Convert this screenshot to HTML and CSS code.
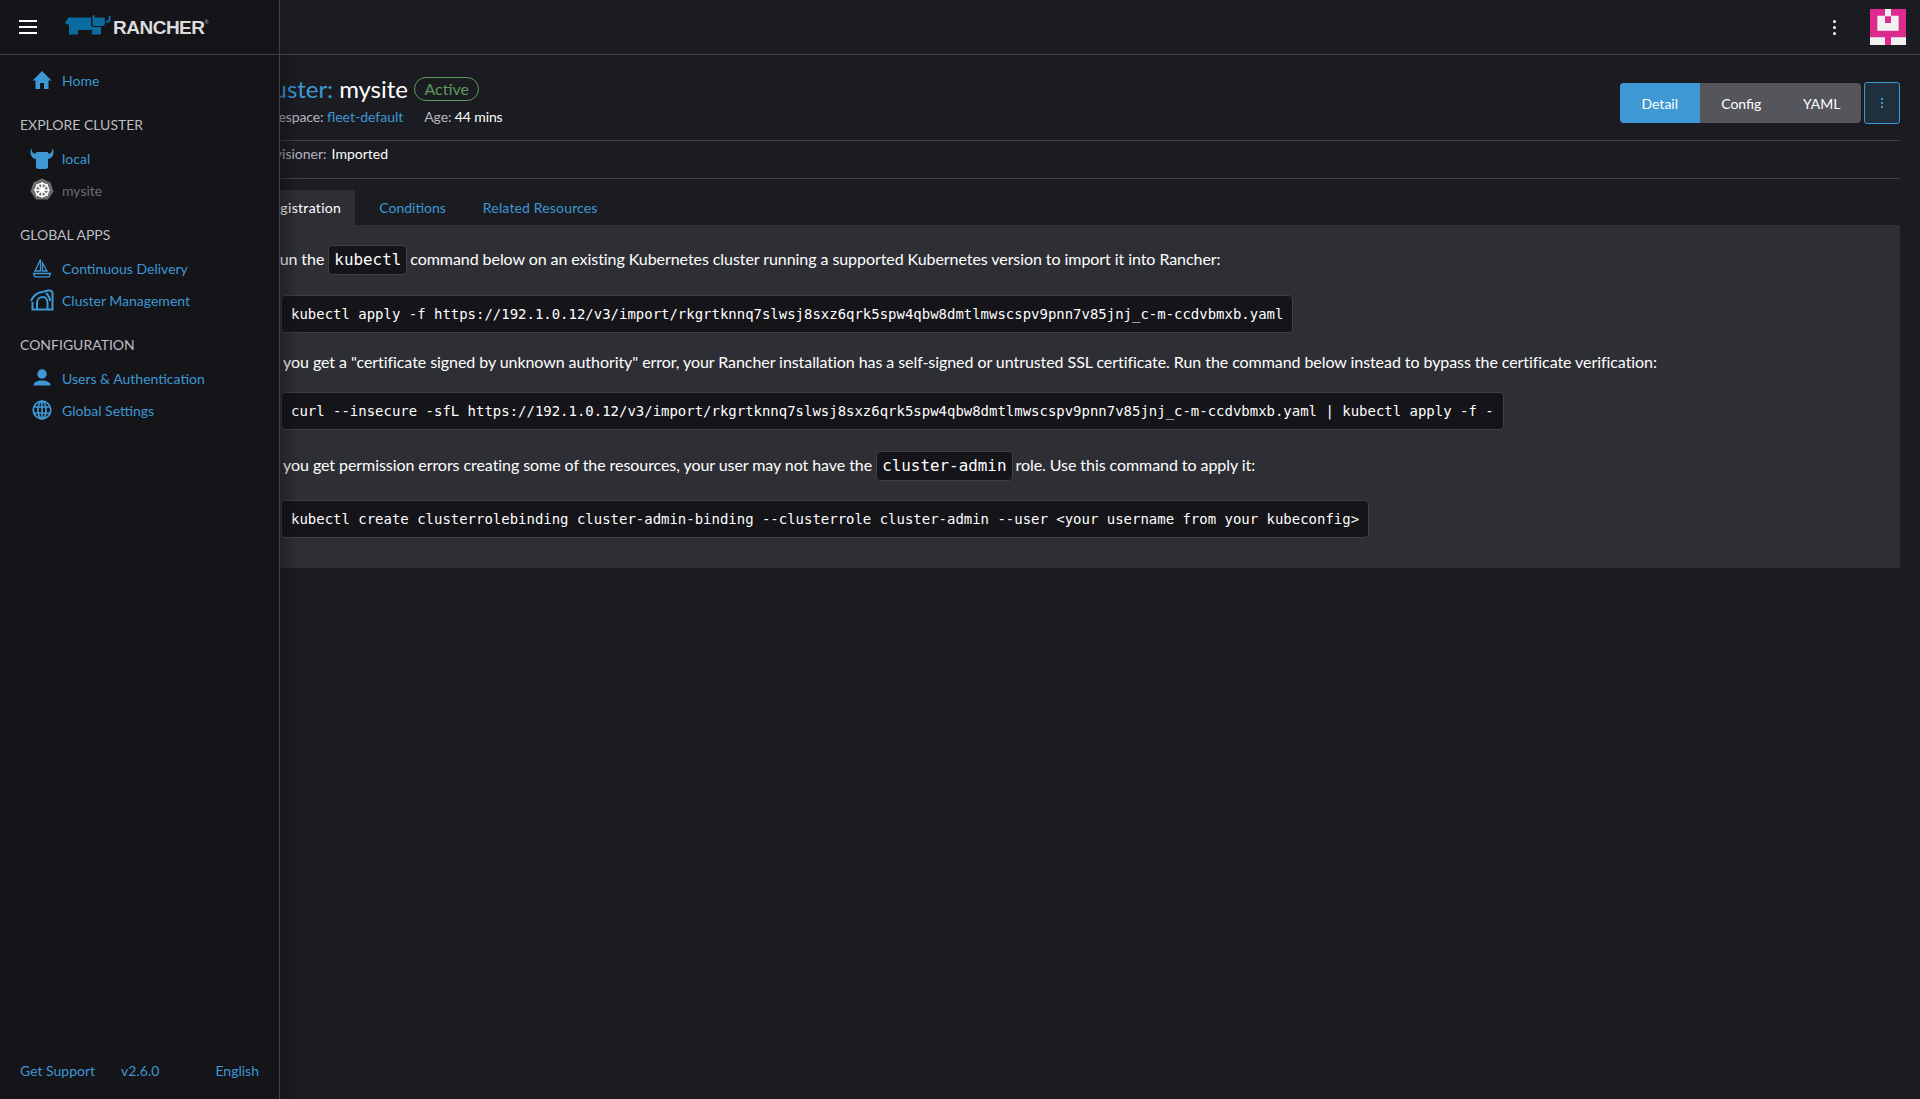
FILE: index.html
```html
<!DOCTYPE html>
<html lang="en">
<head>
<meta charset="utf-8">
<title>Rancher</title>
<link rel="stylesheet" href="styles.css">
</head>
<body>
<aside class="sidebar">
  <div class="brand">
    <div class="burger"><span></span><span></span><span></span></div>
    <div class="logo">
      <svg class="cow" viewBox="0 0 46 22"><path d="M0.5 7L3.5 2.5H26V9C26 11 27 12 29 12H36V19.5H27V15H13V19.5H4V9.5L0.5 9Z"/><path d="M27.5 3V0.5L29.5 0V2.5H39.5L40 8C40 10 39 11 37 11H29.5C28 11 27.5 10 27.5 9Z"/><path d="M41 5.5H43.5V1.5L45.5 0.5V5C45.5 6.5 44.5 7.5 43 7.5H41Z"/></svg>
      <span class="logo-text">RANCHER</span><span class="logo-reg">®</span>
    </div>
  </div>
  <nav class="nav">
    <a class="nav-row"><span class="nav-icon"><svg viewBox="0 0 20 20" class="ico-fill"><path d="M10 1L0.5 10.5H3.5V19H8V13H12V19H16.5V10.5H19.5Z"/></svg></span>Home</a>
    <div class="nav-head">EXPLORE CLUSTER</div>
    <a class="nav-row"><span class="nav-icon nav-icon-lg"><svg viewBox="0 0 24 24" class="ico-fill"><path d="M1 2L2 5C2.500 7 3.500 7.500 6 7.500V13C3 13 0.500 10 0.500 6Z"/><path d="M23 2L22 5C21.500 7 20.500 7.500 18 7.500V13C21 13 23.500 10 23.500 6Z"/><path d="M7 6H17C17.500 6 18 6.500 18 7V20.500C18 22 17 23 15.500 23H8.500C7 23 6 22 6 20.500V7C6 6.500 6.500 6 7 6Z"/></svg></span>local</a>
    <a class="nav-row nav-muted"><span class="nav-icon nav-icon-lg"><svg viewBox="0 0 24 24"><path class="k8s-hex" d="M12 0.500L20.500 4.500L23.500 13.500L18 21.500H6L0.500 13.500L3.500 4.500Z"/><g class="k8s-wheel"><circle cx="12" cy="12" r="6.500"/><circle cx="12" cy="12" r="2"/><path d="M12 4V20M4 12H20M6.300 6.300L17.700 17.700M17.700 6.300L6.300 17.700"/></g></svg></span>mysite</a>
    <div class="nav-head">GLOBAL APPS</div>
    <a class="nav-row"><span class="nav-icon"><svg viewBox="0 0 20 20" class="ico-boat"><path d="M8.500 1.500V13H3Z"/><path d="M10.500 5L15 13H10.500Z"/><path d="M1.500 15.500H18.500L17 18.800H3Z"/></svg></span>Continuous Delivery</a>
    <a class="nav-row"><span class="nav-icon nav-icon-lg"><svg viewBox="0 0 24 22" class="ico-arch"><path d="M1 12C3 7 8 3 12 3C14 3 16 1 20 1.500C22 1.800 22.500 2.500 22.500 4V20.500H2.500V13"/><path d="M7 20.500V14C7 10 10 8 13 8C15.500 8 17.500 10.500 17.500 14V20.500"/><path d="M16 4C18 6 20 9 20 12"/></svg></span>Cluster Management</a>
    <div class="nav-head">CONFIGURATION</div>
    <a class="nav-row"><span class="nav-icon"><svg viewBox="0 0 20 20" class="ico-fill"><circle cx="10" cy="6" r="4.700"/><path d="M1.500 17.500C1.500 14 5 12.500 10 12.500S18.500 14 18.500 17.500Z"/></svg></span>Users &amp; Authentication</a>
    <a class="nav-row"><span class="nav-icon"><svg viewBox="0 0 20 20" class="ico-globe"><circle cx="10" cy="10" r="8.800"/><ellipse cx="10" cy="10" rx="4" ry="8.800"/><path d="M10 1V19M1.500 7H18.500M1.500 13H18.500"/></svg></span>Global Settings</a>
  </nav>
  <footer class="side-foot">
    <a>Get Support</a>
    <a class="foot-ver">v2.6.0</a>
    <a class="foot-lang">English</a>
  </footer>
</aside>

<div class="main">
  <header class="topbar">
    <div class="dots"><span></span><span></span><span></span></div>
    <svg class="avatar" viewBox="0 0 108 108"><rect class="av-bg" width="108" height="108"/><path class="av-fg" d="M45 0H63V20H86V65H22V20H45ZM45 22V42H63V22ZM0 85H45V108H0ZM63 85H108V108H63Z" fill-rule="evenodd"/></svg>
  </header>
  <div class="content">
    <section class="title-block">
      <div class="title-left">
        <h1 class="title"><a class="title-link">Cluster:</a> mysite <span class="badge">Active</span></h1>
        <div class="sub"><span>Namespace: <a>fleet-default</a></span><span>Age: <b>44 mins</b></span></div>
      </div>
      <div class="actions">
        <div class="seg"><button class="seg-btn seg-on">Detail</button><button class="seg-btn seg-off">Config</button><button class="seg-btn seg-off">YAML</button></div>
        <button class="kebab"><span></span><span></span><span></span></button>
      </div>
    </section>
    <div class="meta"><span>Provisioner: </span><b>Imported</b></div>
    <div class="tabs">
      <a class="tab tab-on">Registration</a>
      <a class="tab tab-cond">Conditions</a>
      <a class="tab tab-rel">Related Resources</a>
    </div>
    <section class="panel">
      <p class="para">Run the <code class="inl">kubectl</code> command below on an existing Kubernetes cluster running a supported Kubernetes version to import it into Rancher:</p>
      <div class="cmd cmd-a">kubectl apply -f https://192.1.0.12/v3/import/rkgrtknnq7slwsj8sxz6qrk5spw4qbw8dmtlmwscspv9pnn7v85jnj_c-m-ccdvbmxb.yaml</div>
      <p class="para">If you get a "certificate signed by unknown authority" error, your Rancher installation has a self-signed or untrusted SSL certificate. Run the command below instead to bypass the certificate verification:</p>
      <div class="cmd cmd-b">curl --insecure -sfL https://192.1.0.12/v3/import/rkgrtknnq7slwsj8sxz6qrk5spw4qbw8dmtlmwscspv9pnn7v85jnj_c-m-ccdvbmxb.yaml | kubectl apply -f -</div>
      <p class="para">If you get permission errors creating some of the resources, your user may not have the <code class="inl">cluster-admin</code> role. Use this command to apply it:</p>
      <div class="cmd cmd-c">kubectl create clusterrolebinding cluster-admin-binding --clusterrole cluster-admin --user &lt;your username from your kubeconfig&gt;</div>
    </section>
  </div>
</div>
</body>
</html>
```

FILE: styles.css
```css
* { box-sizing: border-box; }
html, body { height: 100%; }
body {
  margin: 0;
  display: flex;
  height: 100vh;
  overflow: hidden;
  background: #1b1c21;
  color: #e6e6e8;
  font-family: Lato, "Liberation Sans", sans-serif;
  font-size: 14px;
}
a { color: #3d98d3; text-decoration: none; }

/* Sidebar */
.sidebar {
  flex: 0 0 280px;
  display: flex;
  flex-direction: column;
  background: #141419;
  border-right: 1px solid #3f3f45;
}
.brand {
  flex: 0 0 55px;
  display: flex;
  align-items: center;
  padding-left: 19px;
  border-bottom: 1px solid #3f3f45;
}
.burger { width: 18px; display: flex; flex-direction: column; gap: 4px; margin-right: 28px; }
.burger span { height: 2px; background: #fff; }
.logo { display: flex; align-items: flex-start; }
.cow { width: 46px; height: 22px; fill: #0a6c9e; margin-top: 1px; }
.logo-text {
  font-family: "Liberation Sans", sans-serif;
  font-weight: 700;
  font-size: 19px;
  line-height: 27px;
  letter-spacing: -0.500px;
  color: #dcdcdc;
  margin-left: 2px;
}
.logo-reg { font-size: 5px; line-height: 10px; color: #aaa; margin-top: 3px; }

.nav { padding-top: 9px; display: flex; flex-direction: column; }
.nav-row {
  height: 32px;
  display: flex;
  align-items: center;
  padding-left: 32px;
  font-size: 14px;
}
.nav-icon { width: 20px; height: 20px; margin-right: 10px; display: flex; align-items: center; justify-content: center; }
.nav-icon svg { width: 20px; height: 20px; flex: none; }
.nav-icon-lg svg { width: 24px; height: 24px; }
.nav-muted { color: #6b6b72; }
.nav-head {
  height: 32px;
  margin-top: 12px;
  margin-bottom: 2px;
  padding-left: 20px;
  display: flex;
  align-items: center;
  color: #bdbdc2;
  font-size: 14px;
}
.ico-fill { fill: #3d98d3; }
.ico-boat { fill: none; stroke: #3d98d3; stroke-width: 1.300; }
.ico-arch { fill: none; stroke: #3d98d3; stroke-width: 2; }
.ico-globe { fill: none; stroke: #3d98d3; stroke-width: 1.7; }
.k8s-hex { fill: #6d6d6d; }
.k8s-wheel { fill: none; stroke: #fff; stroke-width: 1.5; }

.side-foot {
  margin-top: auto;
  display: flex;
  height: 58px;
  padding: 0 20px;
  align-items: center;
}
.foot-ver { margin-left: 26px; }
.foot-lang { margin-left: auto; }

/* Main */
.main {
  position: relative;
  flex: 1;
  min-width: 0;
  display: flex;
  flex-direction: column;
  overflow: hidden;
}
.main::before {
  content: "";
  position: absolute;
  left: 0;
  top: 55px;
  bottom: 0;
  width: 18px;
  background: linear-gradient(to right, rgba(10, 10, 14, 0.35), rgba(10, 10, 14, 0));
  pointer-events: none;
}
.topbar {
  flex: 0 0 55px;
  display: flex;
  align-items: center;
  justify-content: flex-end;
  padding-right: 14px;
  border-bottom: 1px solid #3f3f45;
}
.dots { display: flex; flex-direction: column; gap: 3px; margin-right: 34px; }
.dots span { width: 3px; height: 3px; border-radius: 50%; background: #fff; }
.avatar { width: 36px; height: 36px; display: block; }
.av-bg { fill: #dd2a8e; }
.av-fg { fill: #f1f1f1; }

.content { margin-left: -30px; padding-right: 20px; }

.title-block {
  height: 86px;
  display: flex;
  justify-content: space-between;
  border-bottom: 1px solid #3f3f45;
}
.title-left { padding-top: 16px; padding-left: 2px; }
.title { margin: 0; font-size: 24px; font-weight: 400; line-height: 36px; color: #fff; display: flex; align-items: center; white-space: pre; letter-spacing: -0.050px; }
.title-link { color: #3d98d3; }
.badge {
  height: 24px;
  padding: 0 9.500px;
  border: 1px solid #5d995d;
  border-radius: 12px;
  color: #5d995d;
  font-size: 16px;
  line-height: 22px;
  letter-spacing: 0;
}
.sub { display: flex; gap: 21px; color: #b6b6c2; font-size: 14px; line-height: 20px; margin-left: -2px; letter-spacing: -0.120px; }
.sub a { letter-spacing: 0; }
.sub b { font-weight: 400; color: #fff; }
.actions { display: flex; gap: 3px; padding-top: 27px; align-items: flex-start; }
.seg { display: flex; height: 40px; margin-top: 1px; border-radius: 4px; overflow: hidden; background: #55565b; }
.seg-btn {
  width: 80.500px;
  border: 0;
  padding: 0;
  background: transparent;
  color: #fff;
  font: inherit;
  font-size: 14px;
}
.seg-off { padding-left: 2px; }
.seg-on { background: #3d98d3; }
.kebab {
  width: 36px;
  height: 42px;
  padding: 0;
  border: 1px solid #3d98d3;
  border-radius: 3px;
  background: #1f2f3d;
  display: flex;
  flex-direction: column;
  align-items: center;
  justify-content: center;
  gap: 2px;
}
.kebab span { width: 2px; height: 2px; background: #3d98d3; }

.meta {
  height: 38px;
  display: flex;
  align-items: flex-start;
  gap: 5px;
  padding-left: 4px;
  padding-top: 3px;
  line-height: 20px;
  color: #b6b6c2;
  border-bottom: 1px solid #3f3f45;
  font-size: 14px;
}
.meta b { font-weight: 400; color: #fff; }

.tabs { display: flex; margin-top: 11px; height: 35px; }
.tab {
  height: 35px;
  display: flex;
  align-items: center;
  padding: 0 15px;
  font-size: 14px;
}
.tab-on { background: #2e2f35; color: #fff; padding: 0 14px; letter-spacing: 0.320px; }
.tab-cond { margin-left: 9px; }
.tab-rel { margin-left: 7px; letter-spacing: 0.160px; }

.panel { background: #2e2f35; padding: 20px 20px 30px; }
.para { margin: 0; font-size: 16px; line-height: 24px; color: #fff; white-space: nowrap; letter-spacing: -0.068px; }
.inl {
  display: inline-block;
  font-family: "DejaVu Sans Mono", "Liberation Mono", monospace;
  font-size: 15.900px;
  line-height: 28px;
  height: 30px;
  padding: 0 5px;
  margin-right: -1px;
  background: #141419;
  border: 1px solid #3f3f45;
  border-radius: 4px;
  color: #fff;
  letter-spacing: 0;
}
.cmd {
  width: max-content;
  height: 38px;
  margin: 20px 0 17px 11px;
  padding: 0 9px;
  display: flex;
  align-items: center;
  background: #141419;
  border: 1px solid #3f3f45;
  border-radius: 4px;
  font-family: "DejaVu Sans Mono", "Liberation Mono", monospace;
  font-size: 13.970px;
  color: #fff;
  white-space: pre;
}
.cmd-b { margin: 18px 0 21px 11px; }
.cmd-c { margin: 19px 0 0 11px; }
```
